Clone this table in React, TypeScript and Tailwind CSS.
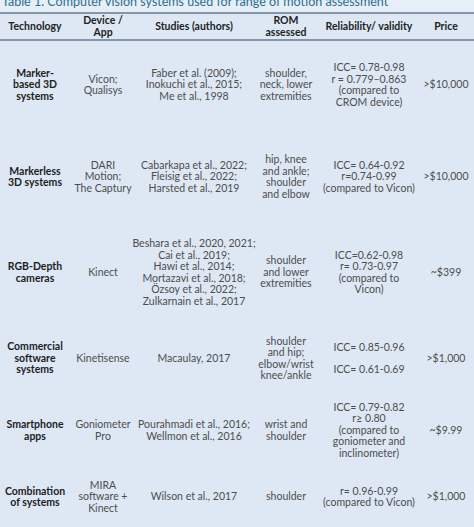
import React from 'react';

interface Row {
  tech: string[];
  device: string[];
  studies: string[];
  rom: string[];
  rel: React.ReactNode;
  price: string;
  h: string;
}

const lines = (arr: string[]) =>
  arr.map((l, i) => (
    <React.Fragment key={i}>
      {l}
      {i < arr.length - 1 && <br />}
    </React.Fragment>
  ));

const rows: Row[] = [
  {
    tech: ['Marker-', 'based 3D', 'systems'],
    device: ['Vicon;', 'Qualisys'],
    studies: ['Faber et al. (2009);', 'Inokuchi et al., 2015;', 'Me et al., 1998'],
    rom: ['shoulder,', 'neck, lower', 'extremities'],
    rel: lines(['ICC= 0.78-0.98', 'r = 0.779–0.863', '(compared to', 'CROM device)']),
    price: '>$10,000',
    h: 'h-[88px]',
  },
  {
    tech: ['Markerless', '3D systems'],
    device: ['DARI', 'Motion;', 'The Captury'],
    studies: ['Cabarkapa et al., 2022;', 'Fleisig et al., 2022;', 'Harsted et al., 2019'],
    rom: ['hip, knee', 'and ankle;', 'shoulder', 'and elbow'],
    rel: lines(['ICC= 0.64-0.92', 'r=0.74-0.99', '(compared to Vicon)']),
    price: '>$10,000',
    h: 'h-[96px]',
  },
  {
    tech: ['RGB-Depth', 'cameras'],
    device: ['Kinect'],
    studies: [
      'Beshara et al., 2020, 2021;',
      'Cai et al., 2019;',
      'Hawi et al., 2014;',
      'Mortazavi et al., 2018;',
      'Özsoy et al., 2022;',
      'Zulkarnain et al., 2017',
    ],
    rom: ['shoulder', 'and lower', 'extremities'],
    rel: lines(['ICC=0.62-0.98', 'r= 0.73-0.97', '(compared to', 'Vicon)']),
    price: '~$399',
    h: 'h-[95px]',
  },
  {
    tech: ['Commercial', 'software', 'systems'],
    device: ['Kinetisense'],
    studies: ['Macaulay, 2017'],
    rom: ['shoulder', 'and hip;', 'elbow/wrist', 'knee/ankle'],
    rel: (
      <div className="flex flex-col gap-[10px]">
        <span>ICC= 0.85-0.96</span>
        <span>ICC= 0.61-0.69</span>
      </div>
    ),
    price: '>$1,000',
    h: 'h-[77px]',
  },
  {
    tech: ['Smartphone', 'apps'],
    device: ['Goniometer', 'Pro'],
    studies: ['Pourahmadi et al., 2016;', 'Wellmon et al., 2016'],
    rom: ['wrist and', 'shoulder'],
    rel: lines(['ICC= 0.79-0.82', 'r≥ 0.80', '(compared to', 'goniometer and', 'inclinometer)']),
    price: '~$9.99',
    h: 'h-[67px]',
  },
  {
    tech: ['Combination', 'of systems'],
    device: ['MIRA', 'software +', 'Kinect'],
    studies: ['Wilson et al., 2017'],
    rom: ['shoulder'],
    rel: lines(['r= 0.96-0.99', '(compared to Vicon)']),
    price: '>$1,000',
    h: 'h-[66px]',
  },
];

const cols = 'grid grid-cols-[70px_66px_116px_68px_98px_56px]';
const cell = 'flex items-center justify-center text-center';

export default function App() {
  return (
    <div className="w-[474px] h-[527px] overflow-hidden bg-[#e6eef8] font-['Lato','Liberation_Sans',sans-serif]">
      {/* Title, cut off by the top edge */}
      <div className="h-[12px] overflow-hidden">
        <div className="-mt-[6px] pl-[2px] text-[12.5px] leading-[16px] text-[#2a6f8c] whitespace-nowrap">
          Table 1. Computer vision systems used for range of motion assessment
        </div>
      </div>

      <div className="bg-[#dde8f4]">
        {/* Header */}
        <div className={`${cols} h-[29px] border-t-2 border-b-2 border-[#8796a6] text-[10.5px] leading-[11.5px] font-bold text-[#222]`}>
          <div className={cell}>Technology</div>
          <div className={cell}>
            Device /<br />App
          </div>
          <div className={cell}>Studies (authors)</div>
          <div className={cell}>
            ROM<br />assessed
          </div>
          <div className={cell}>Reliability/ validity</div>
          <div className={cell}>Price</div>
        </div>

        {rows.map((r, i) => (
          <div key={i} className={`${cols} ${r.h} text-[10.5px] leading-[11.5px] text-[#4d4d4d]`}>
            <div className={`${cell} font-bold text-[#1e1e1e]`}>
              <div>{lines(r.tech)}</div>
            </div>
            <div className={cell}>
              <div>{lines(r.device)}</div>
            </div>
            <div className={`${cell} whitespace-nowrap`}>
              <div>{lines(r.studies)}</div>
            </div>
            <div className={cell}>
              <div>{lines(r.rom)}</div>
            </div>
            <div className={`${cell} whitespace-nowrap`}>
              <div>{r.rel}</div>
            </div>
            <div className={cell}>{r.price}</div>
          </div>
        ))}
      </div>
    </div>
  );
}
